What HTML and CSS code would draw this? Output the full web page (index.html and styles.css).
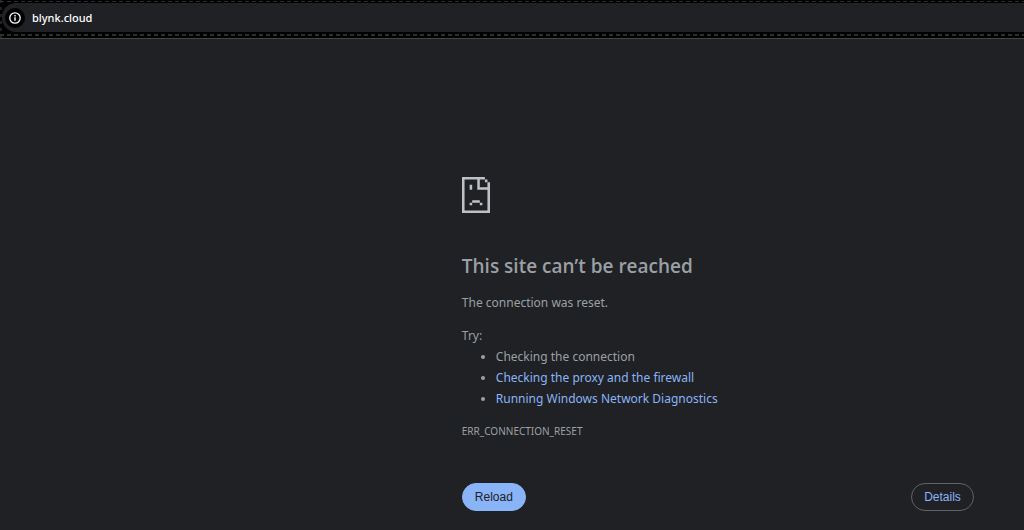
FILE: index.html
```
<!DOCTYPE html>
<html lang="en">
<head>
  <meta charset="UTF-8">
  <title>blynk.cloud</title>
  <meta name="viewport" content="width=device-width, initial-scale=1.0">
  <link rel="stylesheet" href="styles.css">
</head>
<body>

  <header class="toolbar">
    <div class="address-bar">
      <button class="site-info" aria-label="View site information">
        <svg viewBox="0 0 12 12" width="12" height="12">
          <circle cx="6" cy="6" r="5.2" fill="none" stroke="currentColor" stroke-width="1.3"/>
          <path d="M5.3 5.2h1.4v3.6H5.3zM5.3 3h1.4v1.4H5.3z" fill="currentColor"/>
        </svg>
      </button>
      <input class="url" type="text" value="blynk.cloud" aria-label="Address">
    </div>
  </header>

  <main class="error-page">
    <svg class="sad-page" viewBox="0 0 11 14" preserveAspectRatio="none" aria-hidden="true">
      <path fill="currentColor" d="M0 0h9v1h1v1h1v12H0zM1 1v12h9V5H6V1zM7 1v3h3V2H9V1zM3 3h1v2H3zM4 9h3v1H4zM3 10h1v1H3zM7 10h1v1H7z" fill-rule="evenodd"/>
    </svg>

    <h1>This site can’t be reached</h1>
    <p class="summary">The connection was reset.</p>

    <div class="suggestions">
      <p>Try:</p>
      <ul>
        <li>Checking the connection</li>
        <li><a href="#proxy">Checking the proxy and the firewall</a></li>
        <li><a href="#diagnostics">Running Windows Network Diagnostics</a></li>
      </ul>
    </div>

    <div class="error-code">ERR_CONNECTION_RESET</div>

    <div class="buttons">
      <button class="reload">Reload</button>
      <button class="details">Details</button>
    </div>
  </main>

</body>
</html>
```

FILE: styles.css
```
* {
  box-sizing: border-box;
}

body {
  margin: 0;
  background: #202124;
  color: #9aa0a6;
  font-family: 'Noto Sans', 'Segoe UI', sans-serif;
  font-size: 12px;
  line-height: 21px;
}

/* black frame with a row of small dashes above and below the bar */
.toolbar {
  padding: 3px 0 6px 2px;
  background-color: #000;
  background-image:
    linear-gradient(90deg, #2e2e2e 4px, transparent 4px),
    linear-gradient(90deg, #2e2e2e 4px, transparent 4px),
    linear-gradient(#222 3px, transparent 3px);
  background-size: 7px 1px, 7px 2px, 2px 7px;
  background-position: 0 1px, 0 34px, 0 0;
  background-repeat: repeat-x, repeat-x, repeat-y;
  border-bottom: 1px solid #45464a;
}

.address-bar {
  display: flex;
  align-items: center;
  gap: 7px;
  height: 29px;
  padding-left: 3px;
  background: #202124;
  border-radius: 14px 0 0 14px;
}

.site-info {
  display: flex;
  align-items: center;
  justify-content: center;
  width: 20px;
  height: 20px;
  padding: 0;
  border: none;
  border-radius: 50%;
  background: #000;
  color: #fff;
}

.url {
  flex: 1;
  padding: 0;
  border: none;
  outline: none;
  background: transparent;
  color: #fff;
  font-family: inherit;
  font-size: 11px;
  font-weight: 500;
}

.error-page {
  width: 50%;
  margin-left: 45.1%;
  padding-top: 138px;
}

.sad-page {
  display: block;
  width: 28px;
  height: 36px;
  color: #bdc1c6;
}

h1 {
  margin: 39px 0 12px;
  font-family: 'Open Sans', 'Segoe UI', sans-serif;
  font-size: 19px;
  font-weight: 600;
  line-height: 28px;
}

p {
  margin: 0;
}

.suggestions {
  margin-top: 12px;
}

ul {
  margin: 0;
  padding-left: 34px;
}

a {
  color: #8ab4f8;
  text-decoration: none;
}

.error-code {
  margin-top: 12px;
  font-size: 10px;
}

.buttons {
  display: flex;
  justify-content: space-between;
  margin-top: 41px;
}

.buttons button {
  height: 28px;
  padding: 0 12px;
  border: 1px solid #8ab4f8;
  border-radius: 14px;
  font-family: 'Liberation Sans', Arial, sans-serif;
  font-size: 12px;
  cursor: pointer;
}

.reload {
  background: #8ab4f8;
  color: #202124;
}

.buttons .details {
  border-color: #5f6368;
  background: transparent;
  color: #8ab4f8;
}
```
